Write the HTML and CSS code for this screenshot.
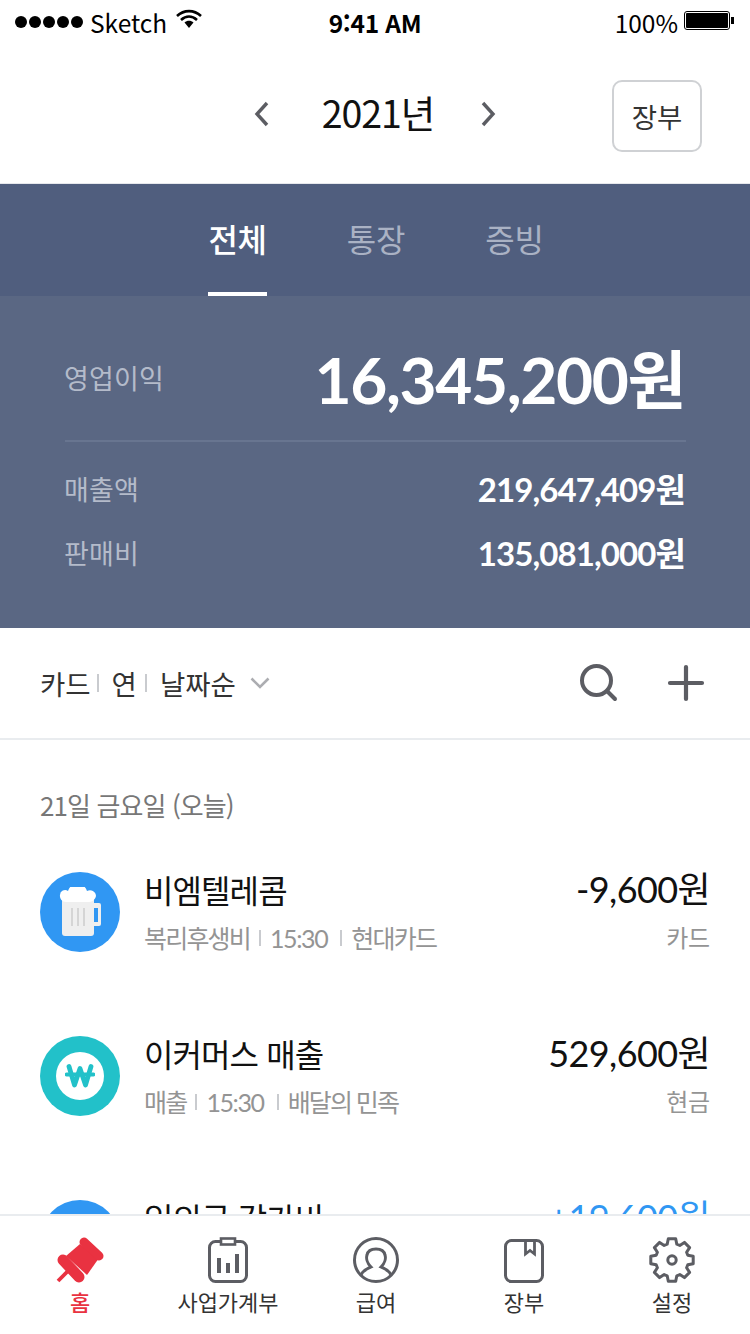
FILE: index.html
```html
<!DOCTYPE html>
<html lang="ko">
<head>
  <meta charset="UTF-8">
  <title>장부</title>
  <meta name="viewport" content="width=device-width, initial-scale=1.0"/>
  <link rel="stylesheet" href="styles.css">
</head>
<body>
<div class="page">
  <div class="status-bar">
    <div class="status-left">
      <span class="signal"><i></i><i></i><i></i><i></i><i></i></span>
      <span class="carrier">Sketch</span>
      <svg class="wifi" width="26" height="20" viewBox="0 0 26 20">
        <path d="M1 7 C8 0.5 18 0.5 25 7 M5 11 C10 6.5 16 6.5 21 11" fill="none" stroke="#000" stroke-width="2.6"/>
        <path d="M8.5 13.5 C11 11.2 15 11.2 17.5 13.5 L13 19 Z" fill="#000"/>
      </svg>
    </div>
    <div class="status-time">9:41 AM</div>
    <div class="status-right">
      <span>100%</span>
      <span class="battery"><i></i></span>
    </div>
  </div>

  <header class="header">
    <div class="year-nav">
      <svg width="16" height="26" viewBox="0 0 16 26"><path d="M13 2 L3 13 L13 24" fill="none" stroke="#5c5d63" stroke-width="3.4"/></svg>
      <span class="year">2021년</span>
      <svg class="year-next" width="16" height="26" viewBox="0 0 16 26"><path d="M3 2 L13 13 L3 24" fill="none" stroke="#5c5d63" stroke-width="3.4"/></svg>
    </div>
    <button class="ledger-btn">장부</button>
  </header>

  <nav class="tabs">
    <a class="tab active">전체</a>
    <a class="tab">통장</a>
    <a class="tab">증빙</a>
  </nav>

  <section class="summary">
    <div class="profit">
      <span class="profit-label">영업이익</span>
      <span class="profit-value">16,345,200원</span>
    </div>
    <div class="summary-row">
      <span class="summary-label">매출액</span>
      <span class="summary-value">219,647,409원</span>
    </div>
    <div class="summary-row">
      <span class="summary-label">판매비</span>
      <span class="summary-value">135,081,000원</span>
    </div>
  </section>

  <section class="filters">
    <div class="filter-left">
      <span>카드</span><i class="sep"></i><span>연</span><i class="sep"></i><span>날짜순</span>
      <svg class="caret" width="20" height="12" viewBox="0 0 20 12"><path d="M1.5 1.5 L10 10 L18.5 1.5" fill="none" stroke="#acadb1" stroke-width="2.6"/></svg>
    </div>
    <div class="filter-right">
      <svg width="40" height="40" viewBox="0 0 40 40"><circle cx="17.5" cy="17.5" r="14.5" fill="none" stroke="#5c5d63" stroke-width="4"/><path d="M28 28 L36 36" stroke="#5c5d63" stroke-width="4" stroke-linecap="round"/></svg>
      <svg width="38" height="38" viewBox="0 0 38 38"><path d="M19 3 V35 M3 19 H35" stroke="#5c5d63" stroke-width="4.2" stroke-linecap="round"/></svg>
    </div>
  </section>

  <main class="list">
    <h3 class="day">21일 금요일 (오늘)</h3>

    <div class="item">
      <div class="avatar blue">
        <svg width="48" height="50" viewBox="0 0 48 50">
          <path d="M6 10 H38 V46 A3 3 0 0 1 35 49 H9 A3 3 0 0 1 6 46 Z" fill="#efefef"/>
          <path d="M38 16 H43 A2 2 0 0 1 45 18 V37 A2 2 0 0 1 43 39 H38 V35 H42 V21 H38 Z" fill="#efefef"/>
          <path d="M4 8 A5 5 0 0 1 12 4 A10 10 0 0 1 31 4 A6 6 0 0 1 40 9 A7 7 0 0 1 33 15 H10 A6 6 0 0 1 4 8 Z" fill="#fff"/>
          <path d="M16 21 V39 M22 21 V39 M28 21 V39" stroke="#d5d5d5" stroke-width="2"/>
        </svg>
      </div>
      <div class="item-body">
        <div class="item-title">비엠텔레콤</div>
        <div class="item-meta"><span class="ko">복리후생비</span><i class="sep"></i><span class="time">15:30</span><i class="sep"></i><span class="ko">현대카드</span></div>
      </div>
      <div class="item-side">
        <div class="amount">-9,600원</div>
        <div class="method">카드</div>
      </div>
    </div>

    <div class="item">
      <div class="avatar teal">
        <span class="won-disc">
          <svg width="30" height="24" viewBox="0 0 30 24">
            <path d="M4 2.5 L9.5 21 L15 4.5 L20.5 21 L26 2.5" fill="none" stroke="#22c1c9" stroke-width="4.8" stroke-linejoin="round" stroke-linecap="round"/>
            <path d="M1.5 10.5 H28.5" stroke="#22c1c9" stroke-width="3.8" stroke-linecap="round"/>
          </svg>
        </span>
      </div>
      <div class="item-body">
        <div class="item-title">이커머스 매출</div>
        <div class="item-meta"><span class="ko">매출</span><i class="sep"></i><span class="time">15:30</span><i class="sep"></i><span class="ko">배달의 민족</span></div>
      </div>
      <div class="item-side">
        <div class="amount">529,600원</div>
        <div class="method">현금</div>
      </div>
    </div>

    <div class="item">
      <div class="avatar blue"></div>
      <div class="item-body">
        <div class="item-title">임의금 감가비</div>
      </div>
      <div class="item-side">
        <div class="amount plus">+19,600원</div>
      </div>
    </div>
  </main>

  <footer class="bottom-nav">
    <a class="nav-item active">
      <svg width="50" height="48" viewBox="0 0 50 48">
        <path d="M3 45 L16 32" stroke="#e93241" stroke-width="3.8"/>
        <path d="M25 8 L44 22 L32 39 L11 20 Z" fill="#e93241"/>
        <path d="M29 6 L44 20" stroke="#e93241" stroke-width="9" stroke-linecap="round"/>
        <path d="M8 24 L24 41" stroke="#e93241" stroke-width="11" stroke-linecap="round"/>
      </svg>
      <span>홈</span>
    </a>
    <a class="nav-item">
      <svg width="40" height="46" viewBox="0 0 40 46">
        <rect x="1.5" y="4.5" width="37" height="40" rx="6" fill="none" stroke="#5c5d63" stroke-width="3"/>
        <rect x="13" y="1.5" width="14" height="6" fill="#fff" stroke="#5c5d63" stroke-width="2.6"/>
        <path d="M11 21 V36 M20 26 V36 M29 17 V36" stroke="#5c5d63" stroke-width="4"/>
      </svg>
      <span>사업가계부</span>
    </a>
    <a class="nav-item">
      <svg width="46" height="46" viewBox="0 0 46 46">
        <circle cx="23" cy="23" r="21.5" fill="none" stroke="#5c5d63" stroke-width="3"/>
        <path d="M8 38 C10 33 14 32 18 30 C14 26 13 21 14 18 C15 13 19 12 23 12 C27 12 31 13 32 18 C33 21 32 26 28 30 C32 32 36 33 38 38" fill="none" stroke="#5c5d63" stroke-width="3"/>
      </svg>
      <span>급여</span>
    </a>
    <a class="nav-item">
      <svg width="40" height="46" viewBox="0 0 40 46">
        <rect x="1.5" y="3.5" width="37" height="41" rx="6" fill="none" stroke="#5c5d63" stroke-width="3"/>
        <path d="M21.5 4 V17 L26 13.5 L30.5 17 V4" fill="none" stroke="#5c5d63" stroke-width="2.8"/>
      </svg>
      <span>장부</span>
    </a>
    <a class="nav-item">
      <svg width="46" height="46" viewBox="0 0 46 46">
        <path d="M18.2 7.2 L19.3 1.8 H26.7 L27.8 7.2 L30.8 8.4 L35.4 5.4 L40.6 10.6 L37.6 15.2 L38.8 18.2 L44.2 19.3 V26.7 L38.8 27.8 L37.6 30.8 L40.6 35.4 L35.4 40.6 L30.8 37.6 L27.8 38.8 L26.7 44.2 H19.3 L18.2 38.8 L15.2 37.6 L10.6 40.6 L5.4 35.4 L8.4 30.8 L7.2 27.8 L1.8 26.7 V19.3 L7.2 18.2 L8.4 15.2 L5.4 10.6 L10.6 5.4 L15.2 8.4 Z" fill="none" stroke="#5c5d63" stroke-width="3" stroke-linejoin="round"/>
        <circle cx="23" cy="23" r="4.2" fill="none" stroke="#5c5d63" stroke-width="3"/>
      </svg>
      <span>설정</span>
    </a>
  </footer>
</div>
</body>
</html>
```

FILE: styles.css
```css
* {
  box-sizing: border-box;
}
html, body {
  margin: 0;
  padding: 0;
}
body {
  background: #fff;
  font-family: 'Lato', 'Noto Sans CJK KR', sans-serif;
  color: #111;
}
.page {
  position: relative;
  width: 750px;
  height: 1334px;
  overflow: hidden;
}

/* status bar */
.status-bar {
  height: 44px;
  padding: 0 15px;
  display: grid;
  grid-template-columns: 1fr auto 1fr;
  align-items: center;
  font-family: 'Noto Sans CJK KR', sans-serif;
  font-size: 24.5px;
  color: #000;
}
.status-left {
  display: flex;
  align-items: center;
}
.signal {
  display: flex;
  gap: 2px;
}
.signal i {
  width: 12px;
  height: 12px;
  border-radius: 50%;
  background: #000;
}
.carrier {
  margin-left: 7px;
}
.wifi {
  margin-left: 9px;
  margin-top: -6px;
}
.status-time {
  font-weight: 700;
  letter-spacing: -0.3px;
}
.status-right {
  display: flex;
  align-items: center;
  justify-content: flex-end;
  gap: 6px;
}
.battery {
  position: relative;
  width: 46px;
  height: 19px;
  margin-top: -3px;
  margin-right: 5px;
  border: 1px solid #000;
  border-radius: 3px;
  padding: 1px;
}
.battery i {
  display: block;
  height: 100%;
  background: #000;
  border-radius: 1px;
}
.battery::after {
  content: "";
  position: absolute;
  right: -5px;
  top: 5px;
  width: 3px;
  height: 7px;
  background: #000;
}

/* header */
.header {
  position: relative;
  height: 140px;
  display: flex;
  justify-content: center;
  align-items: center;
  border-bottom: 1px solid #e6e8ec;
}
.year-nav {
  display: flex;
  align-items: center;
  gap: 52px;
}
.year-next {
  margin-left: -6px;
}
.year {
  font-family: 'Noto Sans CJK KR', sans-serif;
  font-size: 37.5px;
  letter-spacing: -1px;
  color: #111;
  line-height: 50px;
  margin-top: -4px;
}
.ledger-btn {
  position: absolute;
  right: 48px;
  top: 36px;
  width: 90px;
  height: 72px;
  background: #fff;
  border: 2px solid #cfd1d4;
  border-radius: 10px;
  font-family: 'Noto Sans CJK KR', sans-serif;
  font-size: 27.5px;
  color: #333;
  padding: 0;
}

/* tabs */
.tabs {
  height: 112px;
  padding-left: 2px;
  background: #505e7e;
  display: flex;
  justify-content: center;
  gap: 80px;
}
.tab {
  height: 112px;
  padding-top: 31px;
  font-family: 'Noto Sans CJK KR', sans-serif;
  font-size: 32px;
  letter-spacing: -0.25px;
  color: #aab2c4;
}
.tab.active {
  color: #fff;
  font-weight: 500;
  border-bottom: 4px solid #fff;
}

/* summary */
.summary {
  height: 332px;
  background: #5a6783;
  padding: 0 64px 0 65px;
}
.profit {
  height: 146px;
  display: flex;
  justify-content: space-between;
  align-items: center;
  border-bottom: 2px solid #687590;
  margin-bottom: 14px;
  padding-top: 16px;
}
.profit-label {
  font-family: 'Noto Sans CJK KR', sans-serif;
  font-size: 27px;
  letter-spacing: 0.2px;
  color: #b4bbca;
  margin-top: 2px;
  margin-left: -1px;
}
.profit-value {
  font-size: 64px;
  font-weight: 700;
  letter-spacing: -1.4px;
  color: #fff;
  margin-right: 1px;
}
.summary-row {
  height: 64px;
  display: flex;
  justify-content: space-between;
  align-items: center;
}
.summary-label {
  font-family: 'Noto Sans CJK KR', sans-serif;
  font-size: 27px;
  letter-spacing: 0.2px;
  color: #b4bbca;
  margin-left: -1px;
}
.summary-value {
  font-size: 33px;
  font-weight: 700;
  letter-spacing: -0.9px;
  color: #fff;
  margin-right: 1px;
}

/* filters */
.filters {
  height: 112px;
  padding: 0 45px 0 40px;
  display: flex;
  justify-content: space-between;
  align-items: center;
  border-bottom: 2px solid #e9ecef;
}
.filter-left {
  display: flex;
  align-items: center;
  font-family: 'Noto Sans CJK KR', sans-serif;
  font-size: 27.5px;
  color: #333;
}
.sep {
  display: inline-block;
  width: 2px;
  height: 18px;
  background: #c9cbcf;
  margin: 0 13px 0 6px;
}
.sep + span + .sep {
  margin: 0 13px 0 8px;
}
.caret {
  margin-left: 14px;
}
.filter-right {
  display: flex;
  align-items: center;
  gap: 48px;
}

/* list */
.list {
  padding: 46px 40px 0;
}
.day {
  margin: 0 0 48px;
  font-family: 'Noto Sans CJK KR', sans-serif;
  font-size: 26px;
  font-weight: 400;
  line-height: 38px;
  letter-spacing: -0.9px;
  color: #777;
}
.item {
  height: 164px;
  display: flex;
  align-items: flex-start;
}
.avatar {
  width: 80px;
  height: 80px;
  flex: none;
  border-radius: 50%;
  display: flex;
  align-items: center;
  justify-content: center;
}
.avatar.blue {
  background: #3097f3;
}
.avatar.teal {
  background: #22c1c9;
}
.won-disc {
  width: 48px;
  height: 48px;
  border-radius: 50%;
  background: #fff;
  display: flex;
  align-items: center;
  justify-content: center;
}
.item-body {
  flex: 1;
  margin-left: 24px;
}
.item-title {
  font-family: 'Noto Sans CJK KR', sans-serif;
  font-size: 32px;
  line-height: 40px;
  letter-spacing: -0.9px;
  color: #111;
  margin-top: -3px;
}
.item-meta {
  margin-top: 11px;
  display: flex;
  align-items: center;
  font-size: 25px;
  line-height: 36px;
  color: #949494;
}
.item-meta .ko {
  letter-spacing: -1.8px;
}
.item-meta .time {
  letter-spacing: -1.4px;
  margin-right: 4px;
}
.item-meta .sep,
.item-meta .sep + span + .sep {
  height: 16px;
  margin: 0 9px;
}
.item-side {
  text-align: right;
}
.amount {
  font-size: 36px;
  line-height: 40px;
  letter-spacing: -0.6px;
  color: #111;
  margin-top: -3px;
}
.amount.plus {
  color: #3097f3;
}
.method {
  margin-top: 10px;
  font-family: 'Noto Sans CJK KR', sans-serif;
  font-size: 24px;
  line-height: 36px;
  letter-spacing: -0.2px;
  color: #949494;
}

/* bottom nav */
.bottom-nav {
  position: absolute;
  left: 0;
  right: 0;
  bottom: 0;
  height: 120px;
  padding: 20px 6px 0;
  background: #fff;
  border-top: 2px solid #e9ecef;
  display: grid;
  grid-template-columns: repeat(5, 148px);
}
.nav-item {
  display: flex;
  flex-direction: column;
  align-items: center;
  font-family: 'Noto Sans CJK KR', sans-serif;
  font-size: 22px;
  color: #333;
}
.nav-item svg {
  height: 48px;
  flex: none;
}
.nav-item span {
  margin-top: 1px;
}
.nav-item.active {
  color: #e93241;
  font-weight: 500;
}
```
